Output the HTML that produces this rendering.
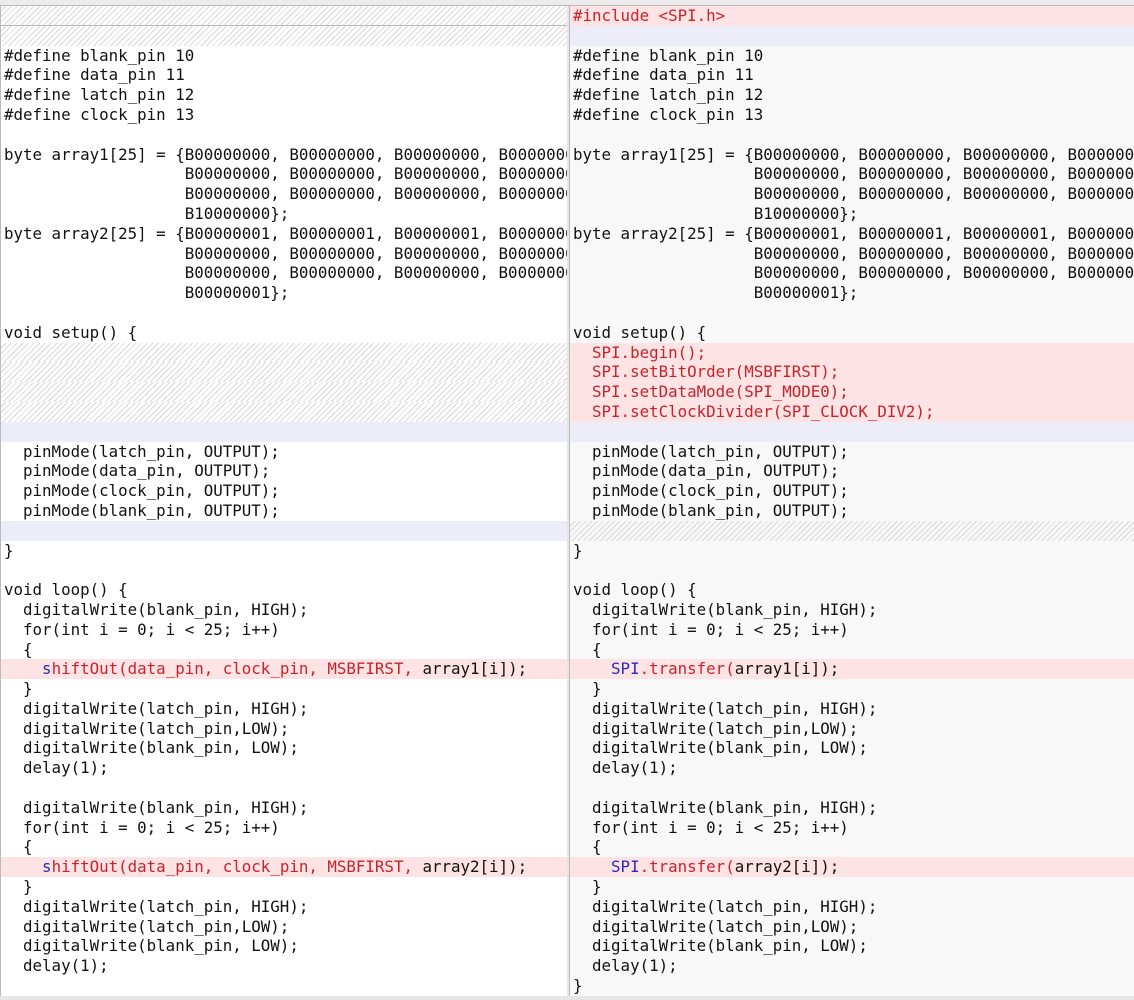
<!DOCTYPE html>
<html><head><meta charset="utf-8"><style>
html,body{margin:0;padding:0;}
body{width:1134px;height:1000px;background:#e6e6e6;position:relative;overflow:hidden;font-family:"DejaVu Sans Mono","Liberation Mono",monospace;font-size:15.8px;color:#111;}
.top{position:absolute;left:0;top:0;width:1134px;height:5px;background:#ececec;border-bottom:1px solid #bbb;}
.pane{position:absolute;top:6px;height:990px;overflow:hidden;}
#L{left:0;width:566px;background:#fff;border-left:1px solid #bbb;}
#R{left:569px;width:565px;background:#f8f8f8;border-left:1px solid #bbb;}
.r{height:19.8px;line-height:19.8px;white-space:pre;padding-left:3px;}
.h{background:repeating-linear-gradient(135deg,#fff 0 3px,#d8d8d8 3px 4px);}
#R .h{background:repeating-linear-gradient(135deg,#f8f8f8 0 3px,#d8d8d8 3px 4px);}
.b{background:#ededfa;}
.p{background:#fde3e3;color:#c8232c;}
.k{color:#111;}
.n{color:#2a2ab8;}
.sep{border-bottom:1px solid #bbb;box-sizing:border-box;}
</style></head><body>
<div class="top"></div>
<div class="pane" id="L">
<div class="r h sep"></div>
<div class="r h"></div>
<div class="r">#define blank_pin 10</div>
<div class="r">#define data_pin 11</div>
<div class="r">#define latch_pin 12</div>
<div class="r">#define clock_pin 13</div>
<div class="r"></div>
<div class="r">byte array1[25] = {B00000000, B00000000, B00000000, B00000000,</div>
<div class="r">                   B00000000, B00000000, B00000000, B00000000,</div>
<div class="r">                   B00000000, B00000000, B00000000, B00000000,</div>
<div class="r">                   B10000000};</div>
<div class="r">byte array2[25] = {B00000001, B00000001, B00000001, B00000001,</div>
<div class="r">                   B00000000, B00000000, B00000000, B00000000,</div>
<div class="r">                   B00000000, B00000000, B00000000, B00000000,</div>
<div class="r">                   B00000001};</div>
<div class="r"></div>
<div class="r">void setup() {</div>
<div class="r h"></div>
<div class="r h"></div>
<div class="r h"></div>
<div class="r h"></div>
<div class="r b"></div>
<div class="r">  pinMode(latch_pin, OUTPUT);</div>
<div class="r">  pinMode(data_pin, OUTPUT);</div>
<div class="r">  pinMode(clock_pin, OUTPUT);</div>
<div class="r">  pinMode(blank_pin, OUTPUT);</div>
<div class="r b"></div>
<div class="r">}</div>
<div class="r"></div>
<div class="r">void loop() {</div>
<div class="r">  digitalWrite(blank_pin, HIGH);</div>
<div class="r">  for(int i = 0; i &lt; 25; i++)</div>
<div class="r">  {</div>
<div class="r p">    <span class="n">s</span>hiftOut(data_pin, clock_pin, MSBFIRST, <span class="k">array1[i]);</span></div>
<div class="r">  }</div>
<div class="r">  digitalWrite(latch_pin, HIGH);</div>
<div class="r">  digitalWrite(latch_pin,LOW);</div>
<div class="r">  digitalWrite(blank_pin, LOW);</div>
<div class="r">  delay(1);</div>
<div class="r"></div>
<div class="r">  digitalWrite(blank_pin, HIGH);</div>
<div class="r">  for(int i = 0; i &lt; 25; i++)</div>
<div class="r">  {</div>
<div class="r p">    <span class="n">s</span>hiftOut(data_pin, clock_pin, MSBFIRST, <span class="k">array2[i]);</span></div>
<div class="r">  }</div>
<div class="r">  digitalWrite(latch_pin, HIGH);</div>
<div class="r">  digitalWrite(latch_pin,LOW);</div>
<div class="r">  digitalWrite(blank_pin, LOW);</div>
<div class="r">  delay(1);</div>
<div class="r"></div>
</div>
<div class="pane" id="R">
<div class="r p">#include &lt;SPI.h&gt;</div>
<div class="r b"></div>
<div class="r">#define blank_pin 10</div>
<div class="r">#define data_pin 11</div>
<div class="r">#define latch_pin 12</div>
<div class="r">#define clock_pin 13</div>
<div class="r"></div>
<div class="r">byte array1[25] = {B00000000, B00000000, B00000000, B00000000,</div>
<div class="r">                   B00000000, B00000000, B00000000, B00000000,</div>
<div class="r">                   B00000000, B00000000, B00000000, B00000000,</div>
<div class="r">                   B10000000};</div>
<div class="r">byte array2[25] = {B00000001, B00000001, B00000001, B00000001,</div>
<div class="r">                   B00000000, B00000000, B00000000, B00000000,</div>
<div class="r">                   B00000000, B00000000, B00000000, B00000000,</div>
<div class="r">                   B00000001};</div>
<div class="r"></div>
<div class="r">void setup() {</div>
<div class="r p">  SPI.begin();</div>
<div class="r p">  SPI.setBitOrder(MSBFIRST);</div>
<div class="r p">  SPI.setDataMode(SPI_MODE0);</div>
<div class="r p">  SPI.setClockDivider(SPI_CLOCK_DIV2);</div>
<div class="r b"></div>
<div class="r">  pinMode(latch_pin, OUTPUT);</div>
<div class="r">  pinMode(data_pin, OUTPUT);</div>
<div class="r">  pinMode(clock_pin, OUTPUT);</div>
<div class="r">  pinMode(blank_pin, OUTPUT);</div>
<div class="r h"></div>
<div class="r">}</div>
<div class="r"></div>
<div class="r">void loop() {</div>
<div class="r">  digitalWrite(blank_pin, HIGH);</div>
<div class="r">  for(int i = 0; i &lt; 25; i++)</div>
<div class="r">  {</div>
<div class="r p">    <span class="n">SPI</span>.transfer(<span class="k">array1[i]);</span></div>
<div class="r">  }</div>
<div class="r">  digitalWrite(latch_pin, HIGH);</div>
<div class="r">  digitalWrite(latch_pin,LOW);</div>
<div class="r">  digitalWrite(blank_pin, LOW);</div>
<div class="r">  delay(1);</div>
<div class="r"></div>
<div class="r">  digitalWrite(blank_pin, HIGH);</div>
<div class="r">  for(int i = 0; i &lt; 25; i++)</div>
<div class="r">  {</div>
<div class="r p">    <span class="n">SPI</span>.transfer(<span class="k">array2[i]);</span></div>
<div class="r">  }</div>
<div class="r">  digitalWrite(latch_pin, HIGH);</div>
<div class="r">  digitalWrite(latch_pin,LOW);</div>
<div class="r">  digitalWrite(blank_pin, LOW);</div>
<div class="r">  delay(1);</div>
<div class="r">}</div>
</div>
</body></html>
